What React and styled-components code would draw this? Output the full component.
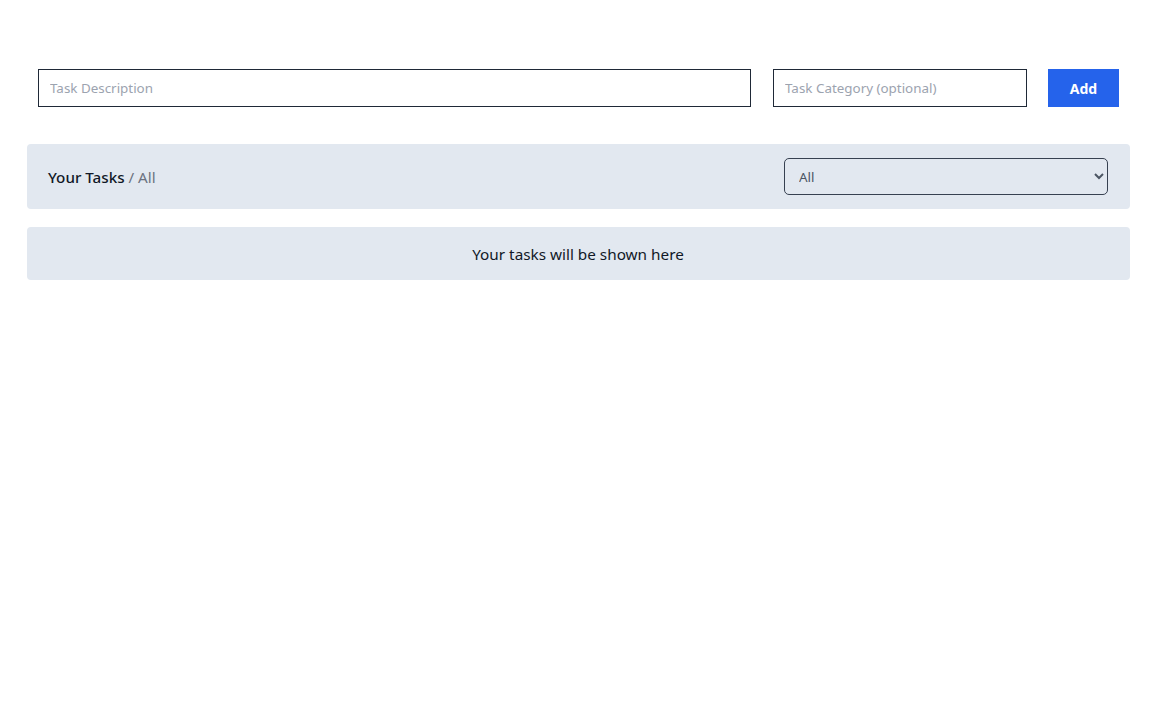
import React, { useState } from "react";
import styled, { createGlobalStyle } from "styled-components";

const GlobalStyle = createGlobalStyle`
  body {
    margin: 0;
    background: #fff;
    font-family: "Noto Sans", "Open Sans", sans-serif;
    color: #111827;
  }
`;

const Page = styled.div`
  width: 1103px;
  margin: 0 0 0 27px;
  padding-top: 69px;
`;

const Form = styled.form`
  display: flex;
  align-items: center;
  padding: 0 11px;
  gap: 22px;
`;

const Input = styled.input`
  box-sizing: border-box;
  width: ${(p) => p.$width}px;
  height: 38px;
  padding: 0 11px;
  border: 1px solid #1f2937;
  border-radius: 0;
  font-family: inherit;
  font-size: 13.4px;
  color: #111827;
  outline: none;
  &::placeholder {
    color: #9ca3af;
  }
`;

const AddButton = styled.button`
  box-sizing: border-box;
  width: 71px;
  height: 38px;
  margin-left: -1px;
  border: none;
  background: #2563eb;
  color: #fff;
  font-family: inherit;
  font-weight: 700;
  font-size: 14px;
  cursor: pointer;
`;

const Panel = styled.div`
  box-sizing: border-box;
  background: #e2e8f0;
  border-radius: 4px;
  margin-top: ${(p) => p.$top}px;
  height: ${(p) => p.$height}px;
  display: flex;
  align-items: center;
  justify-content: ${(p) => (p.$center ? "center" : "space-between")};
  padding: 0 22px 0 21px;
`;

const Title = styled.div`
  font-size: 15.2px;
  font-weight: 500;
  color: #111827;
`;

const Crumb = styled.span`
  font-weight: 400;
  color: #6b7280;
`;

const Select = styled.select`
  box-sizing: border-box;
  width: 324px;
  height: 37px;
  padding: 0 8px 0 10px;
  border: 1px solid #374151;
  border-radius: 5px;
  background: #e2e8f0;
  font-family: inherit;
  font-size: 13.4px;
  color: #4b5563;
  outline: none;
`;

const Empty = styled.p`
  margin: 0;
  font-size: 15.3px;
  color: #111827;
`;

export default function App() {
  const [category, setCategory] = useState("All");
  return (
    <>
      <GlobalStyle />
      <Page>
        <Form onSubmit={(e) => e.preventDefault()}>
          <Input $width={713} placeholder="Task Description" />
          <Input $width={254} placeholder="Task Category (optional)" />
          <AddButton type="submit">Add</AddButton>
        </Form>
        <Panel $top={37} $height={65}>
          <Title>
            Your Tasks <Crumb>/ {category}</Crumb>
          </Title>
          <Select value={category} onChange={(e) => setCategory(e.target.value)}>
            <option>All</option>
          </Select>
        </Panel>
        <Panel $top={18} $height={53} $center>
          <Empty>Your tasks will be shown here</Empty>
        </Panel>
      </Page>
    </>
  );
}
